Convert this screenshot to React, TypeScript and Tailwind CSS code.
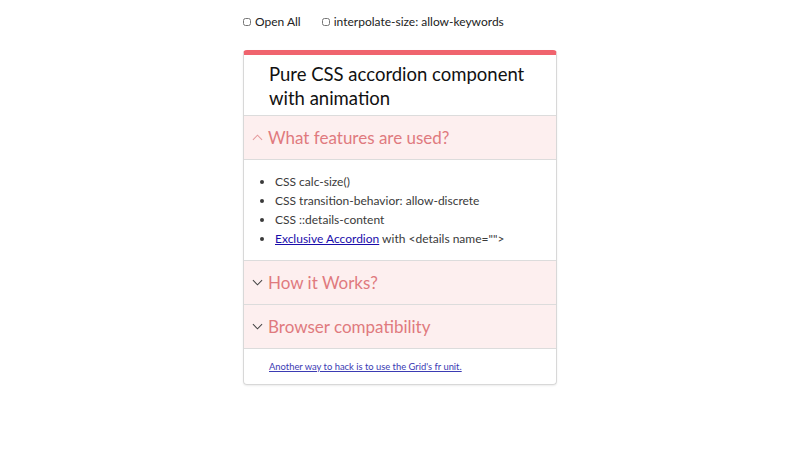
import { useState } from "react";

const items = [
  { title: "What features are used?", open: true },
  { title: "How it Works?", open: false },
  { title: "Browser compatibility", open: false },
];

function Chevron({ up, className }: { up: boolean; className: string }) {
  return (
    <svg viewBox="0 0 12 12" className={className} fill="none" stroke="currentColor" strokeWidth="1.1">
      {up ? <path d="M1 8.5 6 3.5l5 5" /> : <path d="M1 3.5 6 8.5 11 3.5" />}
    </svg>
  );
}

export default function App() {
  const [openAll, setOpenAll] = useState(false);
  const [interp, setInterp] = useState(false);

  return (
    <div className="min-h-[450px] bg-white font-['Lato',sans-serif] text-[#333]">
      <div className="mx-auto w-[314px] pt-[13px]">
        <div className="flex items-center gap-[21px] text-[12px] leading-[17px] text-[#222]">
          <label className="flex items-center gap-[4px]">
            <input type="checkbox" checked={openAll} onChange={() => setOpenAll(!openAll)} className="h-[8px] w-[8px]" />
            Open All
          </label>
          <label className="flex items-center gap-[4px]">
            <input type="checkbox" checked={interp} onChange={() => setInterp(!interp)} className="h-[8px] w-[8px]" />
            interpolate-size: allow-keywords
          </label>
        </div>

        <div className="mt-[20px] overflow-hidden rounded-[4px] border border-t-[5px] border-[#d8d8d8] border-t-[#f0646e] shadow-[0_1px_2px_rgba(0,0,0,0.08)]">
          <h1 className="border-b border-[#dcdcdc] px-[25px] pb-[5px] pt-[7px] text-[18.5px] leading-[24px] font-normal text-[#111]">
            Pure CSS accordion component with animation
          </h1>

          {items.map((item) => (
            <div key={item.title} className="border-b border-[#dcdcdc]">
              <div className="flex h-[43px] items-center gap-[5px] bg-[#fdefef] px-[8px] text-[#e07a7e]">
                <Chevron up={item.open} className={item.open ? "h-[11px] w-[11px] text-[#e59a9c]" : "h-[11px] w-[11px] text-[#444]"} />
                <span className="text-[17px] leading-[24px]">{item.title}</span>
              </div>
              {item.open && (
                <ul className="list-disc border-t border-[#dcdcdc] py-[12px] pl-[31px] text-[12px] leading-[19px] text-[#3a3a3a]">
                  <li>CSS calc-size()</li>
                  <li>CSS transition-behavior: allow-discrete</li>
                  <li>CSS ::details-content</li>
                  <li>
                    <a href="#" className="text-[#1a0dab] underline">Exclusive Accordion</a> with &lt;details name=""&gt;
                  </li>
                </ul>
              )}
            </div>
          ))}

          <div className="px-[25px] pb-[11px] pt-[11px] text-[9.4px] leading-[13px]">
            <a href="#" className="text-[#3b3bb3] underline">Another way to hack is to use the Grid's fr unit.</a>
          </div>
        </div>
      </div>
    </div>
  );
}
